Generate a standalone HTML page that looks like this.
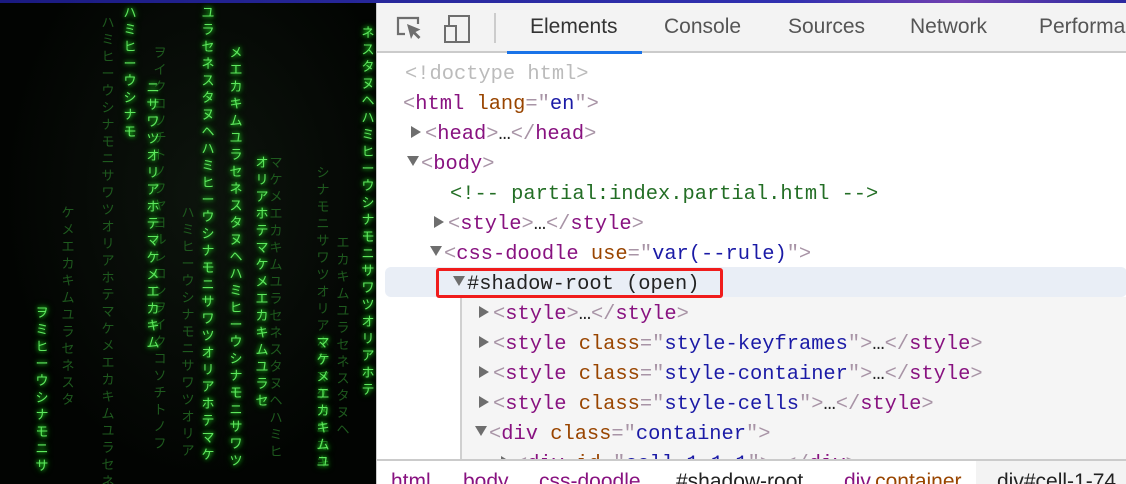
<!DOCTYPE html>
<html><head><style>
*{margin:0;padding:0;box-sizing:border-box}
html,body{width:1126px;height:484px;overflow:hidden}
body{position:relative;background:#fff;font-family:"Liberation Sans",sans-serif}
#topbar{position:absolute;left:0;top:0;width:1126px;height:3px;background:linear-gradient(90deg,#1a1a80,#2a2aa0 40%,#3030b0 70%,#7040b0 85%,#2a2aa0)}
#left{position:absolute;left:0;top:3px;width:376px;height:481px;background:radial-gradient(ellipse at 55% 40%,#0d140d,#020402 70%);overflow:hidden}
.col{position:absolute;width:16px;font:13px/17px "Noto Sans CJK JP",sans-serif;color:#5fe85f;text-shadow:0 0 4px #2f2,0 0 8px #1a1;word-break:break-all;text-align:center}
.dim{color:#1e5a1e;text-shadow:none}
#dt{position:absolute;left:376px;top:3px;width:750px;height:481px;border-left:1px solid #ccc;overflow:hidden}
#tabs{position:absolute;left:0;top:0;width:750px;height:50px;background:#f3f3f3;border-bottom:2px solid #cbcbcb}
.tab{position:absolute;top:12px;font-size:21px;color:#555}
#code{position:absolute;left:0;top:52px;width:750px;height:404px;font:20.4px/30px "Liberation Mono",monospace;color:#222;overflow:hidden}
.r{position:absolute;left:0;height:30px;white-space:pre;width:750px}
.t{color:#881280}.b{color:#a894a6}.a{color:#994500}.v{color:#1a1aa6}.c{color:#236e25}
.tri{display:inline-block;width:0;height:0;border-top:6px solid transparent;border-bottom:6px solid transparent;border-left:10px solid #6e6e6e;margin-right:4px;vertical-align:1px}
.trd{display:inline-block;width:0;height:0;border-left:6px solid transparent;border-right:6px solid transparent;border-top:10px solid #6e6e6e;margin-right:2px;vertical-align:3px}
#crumb{position:absolute;left:0;top:456px;width:750px;height:25px;background:#fff;border-top:2px solid #cbcbcb;font-size:21px;white-space:nowrap;overflow:hidden}
.ci{position:absolute;top:9px}
</style></head><body>
<div id="topbar"></div>
<div id="left">
<div class="col dim" style="left:100px;top:10px">ハミヒーウシナモニサワツオリアホテマケメエカキムユラセネ</div>
<div class="col dim" style="left:152px;top:40px">ヲイクコソチトノフヤヨルレロンヲイクコソチトノフ</div>
<div class="col dim" style="left:180px;top:200px">ハミヒーウシナモニサワツオリア</div>
<div class="col dim" style="left:268px;top:150px">マケメエカキムユラセネスタヌヘハミヒ</div>
<div class="col dim" style="left:315px;top:160px">シナモニサワツオリアホテマケメエカキ</div>
<div class="col dim" style="left:60px;top:200px">ケメエカキムユラセネスタ</div>
<div class="col dim" style="left:335px;top:230px">エカキムユラセネスタヌヘ</div>
<div class="col" style="left:34px;top:300px">ヲミヒーウシナモニサ</div>
<div class="col" style="left:122px;top:0px">ハミヒーウシナモ</div>
<div class="col" style="left:145px;top:75px">ニサワツオリアホテマケメエカキム</div>
<div class="col" style="left:200px;top:0px">ユラセネスタヌヘハミヒーウシナモニサワツオリアホテマケ</div>
<div class="col" style="left:228px;top:40px">メエカキムユラセネスタヌヘハミヒーウシナモニサワツ</div>
<div class="col" style="left:254px;top:150px">オリアホテマケメエカキムユラセ</div>
<div class="col" style="left:360px;top:20px">ネスタヌヘハミヒーウシナモニサワツオリアホテ</div>
<div class="col" style="left:315px;top:330px">マケメエカキムユ</div>
</div>
<div id="dt">
<div id="tabs">
<svg style="position:absolute;left:18px;top:11px" width="30" height="30" viewBox="0 0 30 30"><path d="M10 20H3V4h20v6" fill="none" stroke="#6e6e6e" stroke-width="2.2"/><path d="M12 10l4 15 2.5-5 5 5 2-2-5-5 5-2.5z" fill="#6e6e6e"/></svg>
<svg style="position:absolute;left:66px;top:11px" width="30" height="30" viewBox="0 0 30 30"><rect x="6" y="2" width="20" height="26" fill="none" stroke="#6e6e6e" stroke-width="2"/><rect x="2" y="12" width="11" height="16" fill="#f3f3f3" stroke="#6e6e6e" stroke-width="2"/></svg>
<div style="position:absolute;left:117px;top:10px;width:2px;height:30px;background:#ccc"></div>
<div class="tab" style="left:153px;color:#333">Elements</div>
<div style="position:absolute;left:130px;top:48px;width:135px;height:3px;background:#1a73e8"></div>
<div class="tab" style="left:287px">Console</div>
<div class="tab" style="left:411px">Sources</div>
<div class="tab" style="left:533px">Network</div>
<div class="tab" style="left:662px">Performance</div>
</div>
<div id="code">
<div style="position:absolute;left:83px;top:242px;width:667px;height:162px;background:#f5f5f5;border-left:2px solid #d0d0d0"></div>
<div style="position:absolute;left:8px;top:212px;width:742px;height:30px;background:#e9eef6;border-radius:6px"></div>
<div class="r" style="top:5px;left:28px;color:#bbb">&lt;!doctype html&gt;</div>
<div class="r" style="top:35px;left:26px"><span class="b">&lt;</span><span class="t">html</span> <span class="a">lang</span><span class="b">="</span><span class="v">en</span><span class="b">"&gt;</span></div>
<div class="r" style="top:65px;left:34px"><span class="tri"></span><span class="b">&lt;</span><span class="t">head</span><span class="b">&gt;</span>…<span class="b">&lt;/</span><span class="t">head</span><span class="b">&gt;</span></div>
<div class="r" style="top:95px;left:30px"><span class="trd"></span><span class="b">&lt;</span><span class="t">body</span><span class="b">&gt;</span></div>
<div class="r c" style="top:125px;left:73px">&lt;!-- partial:index.partial.html --&gt;</div>
<div class="r" style="top:155px;left:57px"><span class="tri"></span><span class="b">&lt;</span><span class="t">style</span><span class="b">&gt;</span>…<span class="b">&lt;/</span><span class="t">style</span><span class="b">&gt;</span></div>
<div class="r" style="top:185px;left:53px"><span class="trd"></span><span class="b">&lt;</span><span class="t">css-doodle</span> <span class="a">use</span><span class="b">="</span><span class="v">var(--rule)</span><span class="b">"&gt;</span></div>
<div class="r" style="top:215px;left:76px"><span class="trd"></span>#shadow-root (open)</div>
<div style="position:absolute;left:59px;top:213px;width:287px;height:30px;border:3px solid #f01c1c;border-radius:3px"></div>
<div class="r" style="top:245px;left:102px"><span class="tri"></span><span class="b">&lt;</span><span class="t">style</span><span class="b">&gt;</span>…<span class="b">&lt;/</span><span class="t">style</span><span class="b">&gt;</span></div>
<div class="r" style="top:275px;left:102px"><span class="tri"></span><span class="b">&lt;</span><span class="t">style</span> <span class="a">class</span><span class="b">="</span><span class="v">style-keyframes</span><span class="b">"&gt;</span>…<span class="b">&lt;/</span><span class="t">style</span><span class="b">&gt;</span></div>
<div class="r" style="top:305px;left:102px"><span class="tri"></span><span class="b">&lt;</span><span class="t">style</span> <span class="a">class</span><span class="b">="</span><span class="v">style-container</span><span class="b">"&gt;</span>…<span class="b">&lt;/</span><span class="t">style</span><span class="b">&gt;</span></div>
<div class="r" style="top:335px;left:102px"><span class="tri"></span><span class="b">&lt;</span><span class="t">style</span> <span class="a">class</span><span class="b">="</span><span class="v">style-cells</span><span class="b">"&gt;</span>…<span class="b">&lt;/</span><span class="t">style</span><span class="b">&gt;</span></div>
<div class="r" style="top:365px;left:98px"><span class="trd"></span><span class="b">&lt;</span><span class="t">div</span> <span class="a">class</span><span class="b">="</span><span class="v">container</span><span class="b">"&gt;</span></div>
<div class="r" style="top:395px;left:124px"><span class="tri"></span><span class="b">&lt;</span><span class="t">div</span> <span class="a">id</span><span class="b">="</span><span class="v">cell-1-1-1</span><span class="b">"&gt;</span>…<span class="b">&lt;/</span><span class="t">div</span><span class="b">&gt;</span></div>
</div>
<div id="crumb">
<span class="ci" style="left:14px;color:#881280">html</span>
<span class="ci" style="left:86px;color:#881280">body</span>
<span class="ci" style="left:162px;color:#881280">css-doodle</span>
<span class="ci" style="left:299px;color:#222">#shadow-root</span>
<span class="ci" style="left:467px;color:#881280">div<span style="color:#994500">.container</span></span>
<div style="position:absolute;left:599px;top:0;width:151px;height:25px;background:#f3f3f3"></div>
<span class="ci" style="left:620px;color:#222">div#cell-1-74</span>
</div>
</div>
</body></html>
